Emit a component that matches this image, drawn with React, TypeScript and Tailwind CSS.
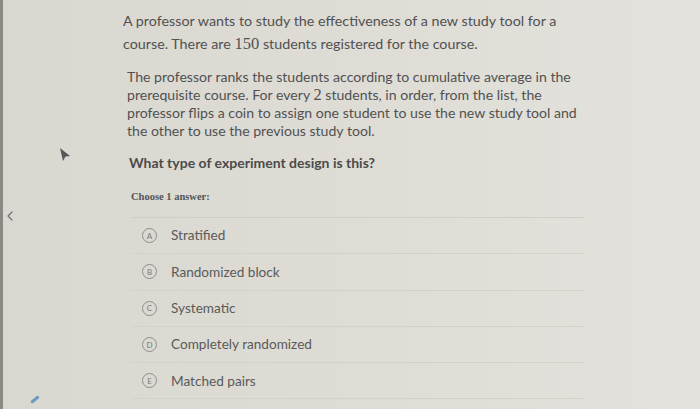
import { ChevronLeft } from "lucide-react";

const options = [
  { key: "A", label: "Stratified" },
  { key: "B", label: "Randomized block" },
  { key: "C", label: "Systematic" },
  { key: "D", label: "Completely randomized" },
  { key: "E", label: "Matched pairs" },
];

const math = "font-['Liberation_Serif',serif] text-[16.5px] leading-none";

const App = () => {
  return (
    <div className="relative w-[700px] h-[409px] overflow-hidden bg-gradient-to-r from-[#d8d7d0] via-[#dedcd5] to-[#e3e2dc] font-['Lato',sans-serif] text-[#515151]">
      {/* screen bezel edge */}
      <div className="absolute inset-y-0 left-0 w-[3px] bg-[#8a8985]" />
      <ChevronLeft className="absolute left-[2px] top-[207px] w-[16px] h-[18px] text-[#6b6b6b]" strokeWidth={1.6} />

      {/* mouse cursor */}
      <svg className="absolute left-[57px] top-[146px]" width="16" height="16" viewBox="0 0 16 16">
        <path d="M3 2 L13 10 L8.5 10.5 L6 15 Z" fill="#3f3f44" opacity="0.85" />
      </svg>

      <div className="flex flex-col pl-[123px] pt-[9px]">
        <p className="text-[14.3px] leading-[23px] whitespace-nowrap">
          A professor wants to study the effectiveness of a new study tool for a
          <br />
          course. There are <span className={math}>150</span> students registered for the course.
        </p>

        <p className="mt-[13px] pl-[4px] text-[14.1px] leading-[18px] whitespace-nowrap">
          The professor ranks the students according to cumulative average in the
          <br />
          prerequisite course. For every <span className={math}>2</span> students, in order, from the list, the
          <br />
          professor flips a coin to assign one student to use the new study tool and
          <br />
          the other to use the previous study tool.
        </p>

        <p className="mt-[14px] pl-[6px] text-[14px] leading-[17px] font-bold text-[#4b4b4b]">
          What type of experiment design is this?
        </p>

        <p className="mt-[19px] pl-[8px] font-['Liberation_Serif',serif] text-[10.5px] leading-[14px] font-bold text-[#555]">
          Choose 1 answer:
        </p>

        <div className="mt-[13px] ml-[8px] mr-[115px] flex flex-col border-t border-[#cfcec7]">
          {options.map((o) => (
            <div key={o.key} className="flex items-center gap-[14px] h-[36.3px] pl-[11px] border-b border-[#d2d1ca]">
              <span className="flex items-center justify-center w-[15px] h-[15px] rounded-full border border-[#8e8e8e] text-[8px] text-[#7a7a7a]">
                {o.key}
              </span>
              <span className="text-[13.6px] text-[#5a5a5a]">{o.label}</span>
            </div>
          ))}
        </div>
      </div>

      {/* blue smudge bottom-left */}
      <div className="absolute left-[30px] top-[398px] w-[10px] h-[3px] rotate-[-40deg] bg-[#6f9bc0] rounded" />
    </div>
  );
};

export default App;
